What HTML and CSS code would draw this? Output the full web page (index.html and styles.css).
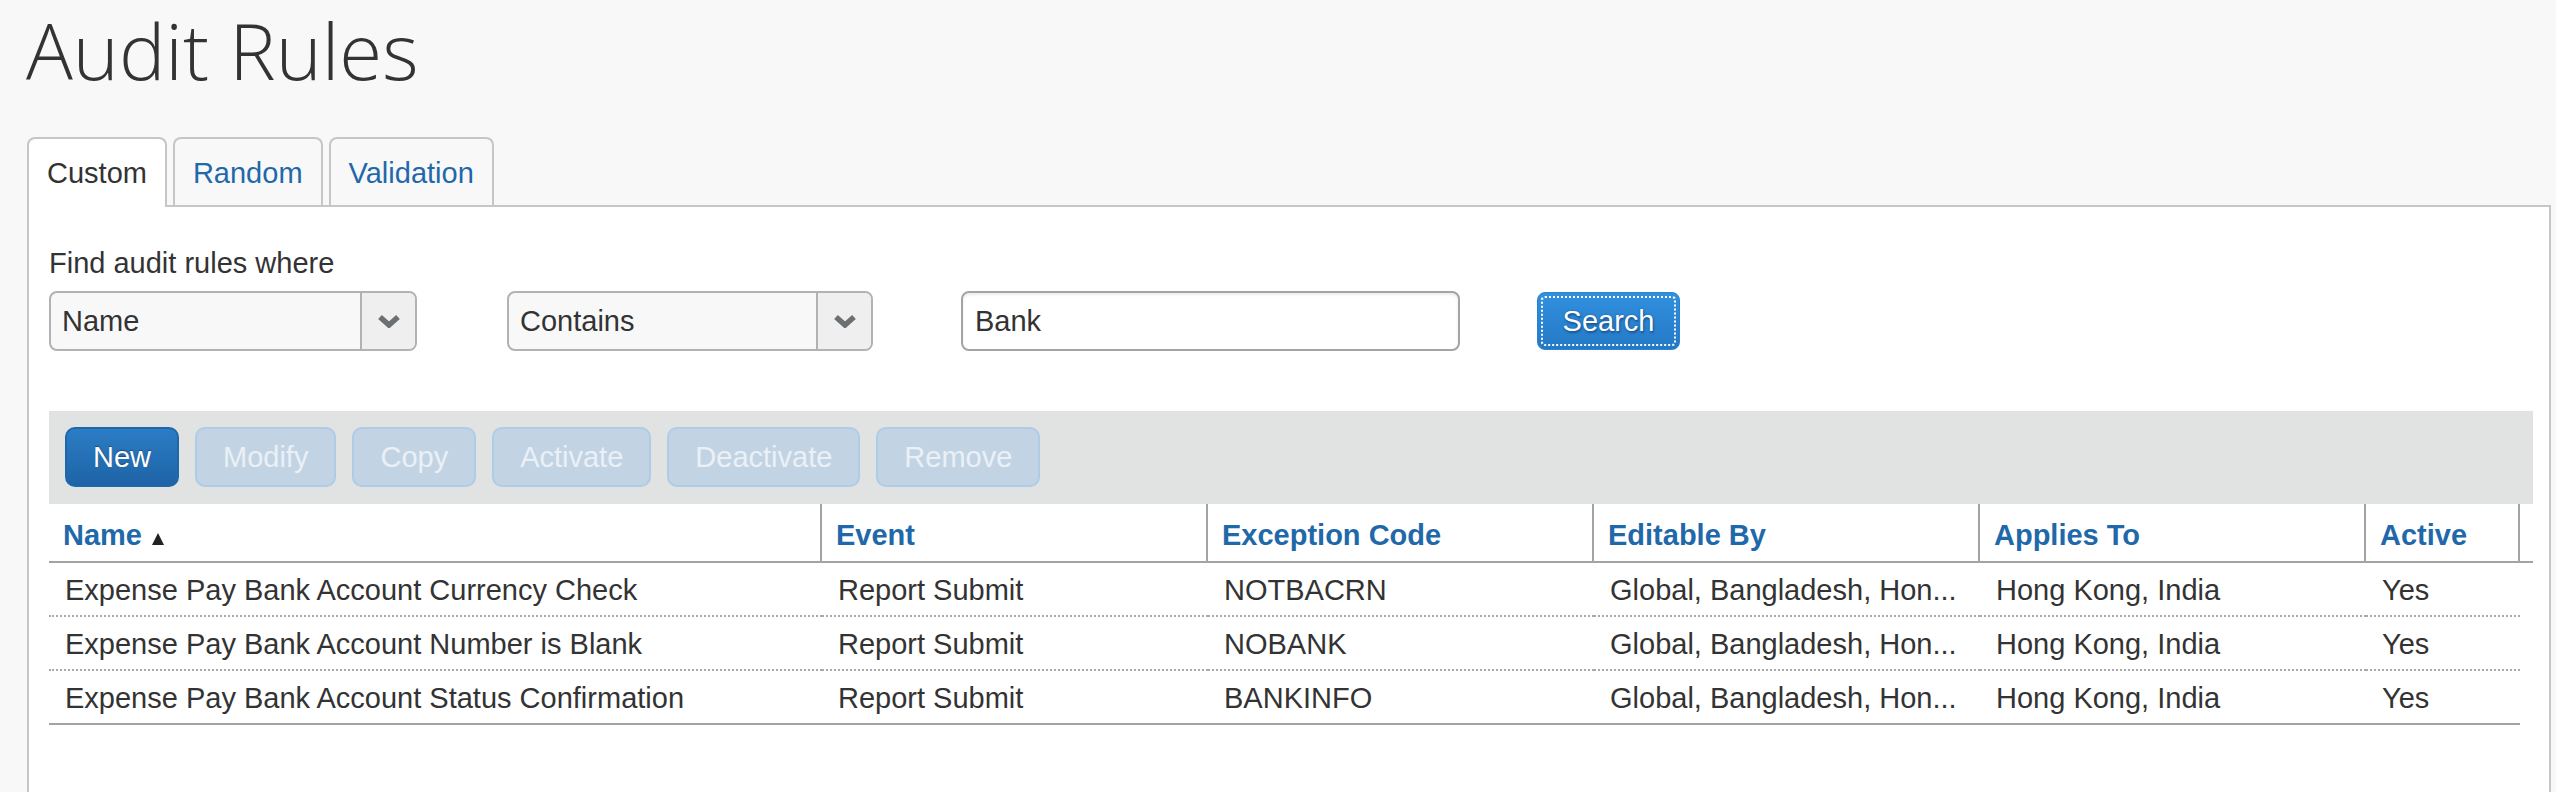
FILE: index.html
```html
<!DOCTYPE html>
<html lang="en">
<head>
  <meta charset="UTF-8">
  <meta name="viewport" content="width=device-width, initial-scale=1.0">
  <title>Audit Rules</title>
  <link rel="stylesheet" href="styles.css">
</head>
<body>

<h1 class="page-title">Audit Rules</h1>

<ul class="tabs">
  <li class="tab active">Custom</li>
  <li class="tab"><a href="#">Random</a></li>
  <li class="tab"><a href="#">Validation</a></li>
</ul>

<div class="panel">
  <form class="search-form">
    <label class="search-label">Find audit rules where</label>
    <div class="search-row">
      <div class="select-box field-name">
        <span class="select-value">Name</span>
        <span class="select-arrow">
          <svg width="24" height="14" viewBox="0 0 24 14"><polyline points="3,3 12,11 21,3" fill="none" stroke="#6c6f72" stroke-width="5.5"/></svg>
        </span>
      </div>
      <div class="select-box field-op">
        <span class="select-value">Contains</span>
        <span class="select-arrow">
          <svg width="24" height="14" viewBox="0 0 24 14"><polyline points="3,3 12,11 21,3" fill="none" stroke="#6c6f72" stroke-width="5.5"/></svg>
        </span>
      </div>
      <input class="search-input" type="text" value="Bank">
      <button class="btn-search" type="button">Search</button>
    </div>
  </form>

  <div class="toolbar">
    <button class="btn btn-primary" type="button">New</button>
    <button class="btn" type="button" disabled>Modify</button>
    <button class="btn" type="button" disabled>Copy</button>
    <button class="btn" type="button" disabled>Activate</button>
    <button class="btn" type="button" disabled>Deactivate</button>
    <button class="btn" type="button" disabled>Remove</button>
  </div>

  <table class="rules">
    <colgroup>
      <col class="col-name">
      <col class="col-mid">
      <col class="col-mid">
      <col class="col-mid">
      <col class="col-mid">
      <col class="col-active">
      <col class="col-filler">
    </colgroup>
    <thead>
      <tr>
        <th>Name <span class="sort-up"></span></th>
        <th>Event</th>
        <th>Exception Code</th>
        <th>Editable By</th>
        <th>Applies To</th>
        <th>Active</th>
        <th class="filler"></th>
      </tr>
    </thead>
    <tbody>
      <tr>
        <td>Expense Pay Bank Account Currency Check</td>
        <td>Report Submit</td>
        <td>NOTBACRN</td>
        <td>Global, Bangladesh, Hon...</td>
        <td>Hong Kong, India</td>
        <td>Yes</td>
      </tr>
      <tr>
        <td>Expense Pay Bank Account Number is Blank</td>
        <td>Report Submit</td>
        <td>NOBANK</td>
        <td>Global, Bangladesh, Hon...</td>
        <td>Hong Kong, India</td>
        <td>Yes</td>
      </tr>
      <tr>
        <td>Expense Pay Bank Account Status Confirmation</td>
        <td>Report Submit</td>
        <td>BANKINFO</td>
        <td>Global, Bangladesh, Hon...</td>
        <td>Hong Kong, India</td>
        <td>Yes</td>
      </tr>
    </tbody>
  </table>
</div>

</body>
</html>
```

FILE: styles.css
```css
body {
  margin: 0;
  background-color: #f8f8f8;
  font-family: "Liberation Sans", Arial, sans-serif;
  font-size: 29px;
  color: #333;
}

.page-title {
  margin: 0 0 37px 26px;
  font-family: "Open Sans", sans-serif;
  font-weight: 300;
  font-size: 78px;
  line-height: 100px;
  color: #333;
}

/* tabs */
.tabs {
  list-style: none;
  margin: 0 0 0 27px;
  padding: 0;
  display: flex;
  align-items: flex-end;
  gap: 6px;
}
.tab {
  position: relative;
  padding: 18px 18px 16px;
  line-height: 32px;
  border: 2px solid #c6c6c6;
  border-bottom: none;
  border-radius: 8px 8px 0 0;
  background-color: #f8f8f8;
}
.tab a {
  color: #1f68a9;
  text-decoration: none;
}
.tab.active {
  z-index: 1;
  background-color: #fff;
  padding-bottom: 18px;
  margin-bottom: -2px;
}

/* panel */
.panel {
  margin: 0 5px 0 27px;
  padding: 37px 16px 70px 20px;
  background-color: #fff;
  border: 2px solid #c6c6c6;
  border-bottom: none;
}

.search-label {
  display: block;
  padding-top: 3px;
  line-height: 32px;
  margin-bottom: 12px;
}
.search-row {
  display: flex;
  align-items: flex-start;
}
.select-box {
  display: flex;
  box-sizing: border-box;
  height: 60px;
  border: 2px solid #b2b2b2;
  border-radius: 8px;
  background-color: #f8f8f8;
  overflow: hidden;
}
.field-name {
  width: 368px;
  margin-right: 90px;
}
.field-op {
  width: 366px;
  margin-right: 88px;
}
.select-value {
  flex: 1;
  padding-left: 11px;
  line-height: 56px;
}
.select-arrow {
  width: 53px;
  display: flex;
  align-items: center;
  justify-content: center;
  border-left: 2px solid #b2b2b2;
  background-color: #efefef;
}
.search-input {
  box-sizing: border-box;
  width: 499px;
  height: 60px;
  margin: 0 77px 0 0;
  padding: 0 12px;
  border: 2px solid #a4a4a4;
  border-radius: 8px;
  box-shadow: inset 0 2px 3px rgba(0, 0, 0, 0.08);
  font-family: inherit;
  font-size: 29px;
  color: #333;
}
.btn-search {
  box-sizing: border-box;
  width: 143px;
  height: 58px;
  margin-top: 1px;
  padding: 0;
  border: 1px solid #2a83d2;
  border-radius: 8px;
  background: linear-gradient(#3190de, #2479c6);
  color: #fff;
  font-family: inherit;
  font-size: 29px;
  text-shadow: 1px 2px 2px #1a5794, 0 0 2px #1a5794;
  outline: 2px dotted #fff;
  outline-offset: -6px;
}

/* toolbar */
.toolbar {
  display: flex;
  gap: 16px;
  margin-top: 60px;
  padding: 16px 16px 17px;
  background-color: #e1e3e2;
}
.btn {
  box-sizing: border-box;
  height: 60px;
  padding: 0 26px;
  border: 2px solid #aecbe7;
  border-radius: 10px;
  background-color: #c2d4e4;
  color: #eaf0f6;
  font-family: inherit;
  font-size: 29px;
}
.btn-primary {
  border-color: #1f67aa;
  background: linear-gradient(#2b7dc5, #1e63a6);
  color: #fff;
  text-shadow: 0 -1px 1px rgba(0, 0, 0, 0.35);
}

/* table */
.rules {
  width: 100%;
  table-layout: fixed;
  border-collapse: separate;
  border-spacing: 0;
}
.col-name { width: 773px; }
.col-mid { width: 386px; }
.col-active { width: 154px; }
.col-filler { width: 13px; }

.rules th {
  padding: 15px 14px 10px;
  line-height: 32px;
  text-align: left;
  color: #1f68a9;
  font-weight: bold;
  border-right: 2px solid #a3a3a3;
  border-bottom: 2px solid #a3a3a3;
  white-space: nowrap;
}
.rules th.filler {
  padding: 0;
  border-right: none;
}
.sort-up {
  display: inline-block;
  margin-left: 2px;
  width: 0;
  height: 0;
  border-left: 6px solid transparent;
  border-right: 6px solid transparent;
  border-bottom: 12px solid #222;
}
.rules td {
  padding: 11px 14px 9px 16px;
  line-height: 32px;
  border-bottom: 2px dotted #a9a9a9;
  white-space: nowrap;
}
.rules tbody tr:last-child td {
  border-bottom: 2px solid #a3a3a3;
}
```
